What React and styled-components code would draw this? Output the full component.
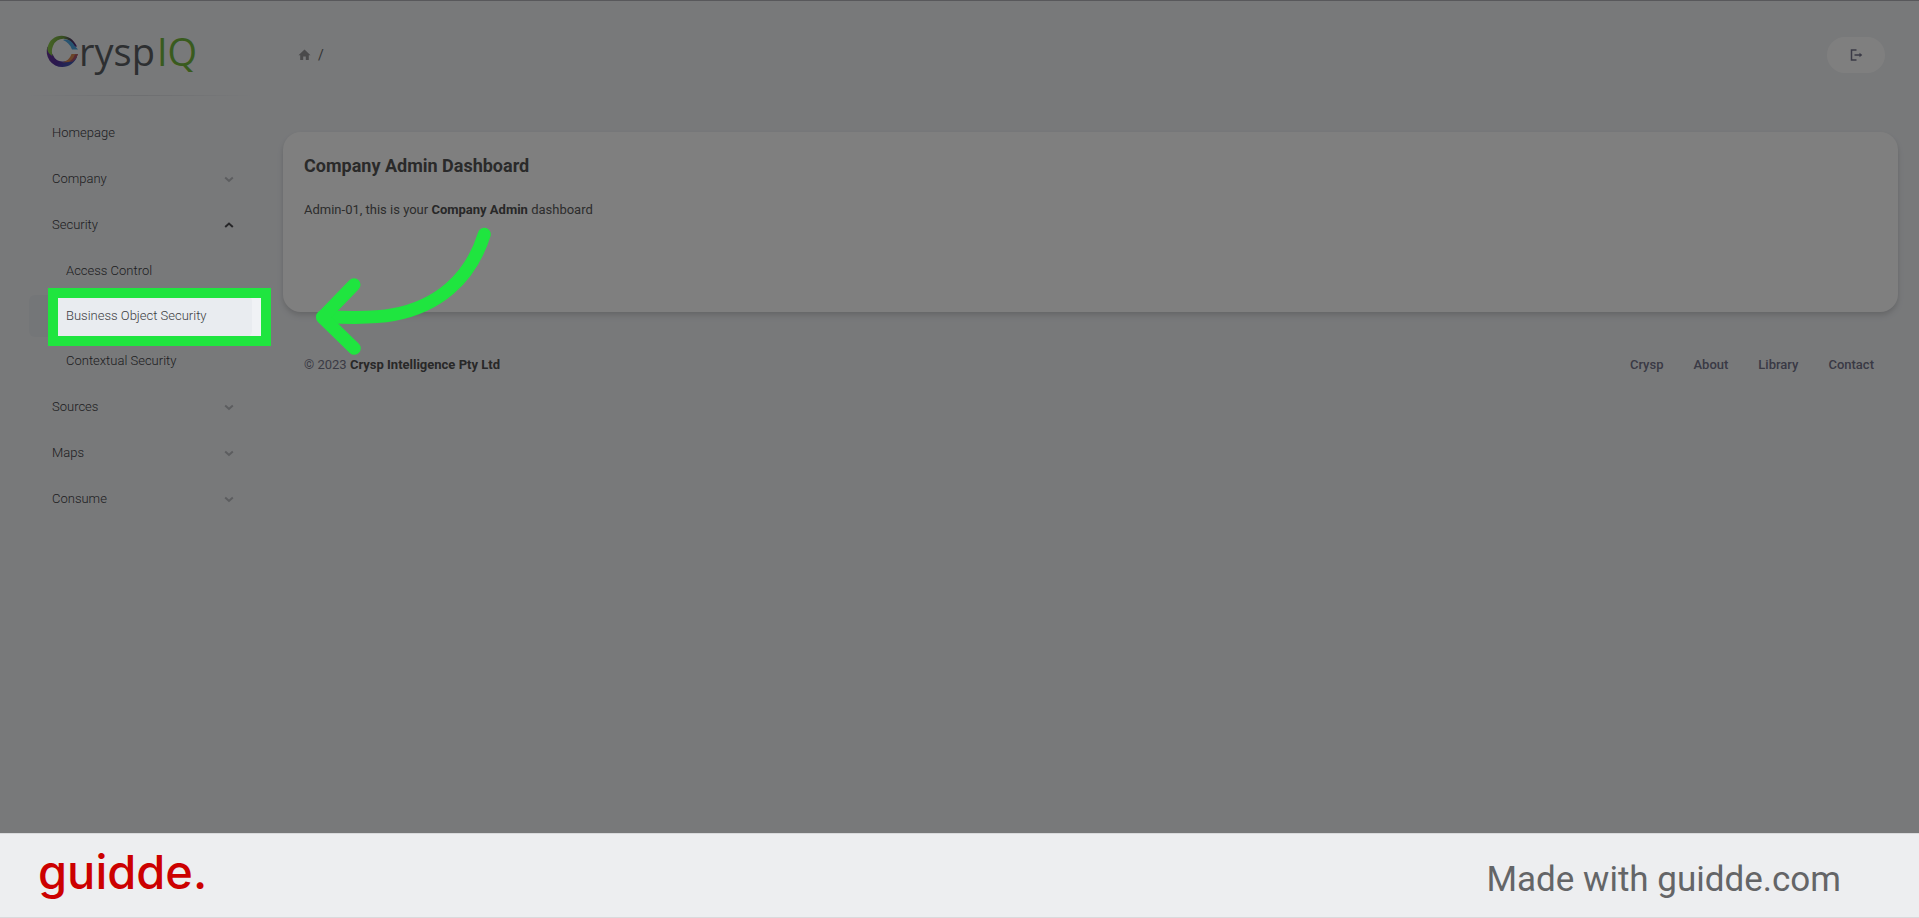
import React from "react";
import styled, { createGlobalStyle } from "styled-components";

const GlobalStyle = createGlobalStyle`
  *, *::before, *::after { box-sizing: border-box; }
  body {
    margin: 0;
    font-family: Roboto, "Liberation Sans", sans-serif;
    font-size: 13px;
    line-height: 20px;
    color: #5a5a5a;
    background: #f0f2f5;
  }
`;

const Page = styled.div`
  display: flex;
  flex-direction: column;
  min-height: 100vh;
`;

const Stage = styled.div`
  position: relative;
  flex: 1;
  display: flex;
  overflow: hidden;
  background: #f0f2f5;
  border-top: 1px solid #58585b;
`;

const Sidebar = styled.aside`
  flex: none;
  width: 283px;
  padding: 20px 31px 32px 29px;
`;

const LogoLink = styled.a`
  display: block;
  height: 62px;
  margin-left: 16px;
  svg { display: block; overflow: visible; }
`;

const Divider = styled.hr`
  height: 1px;
  margin: 12px 0 16px;
  border: 0;
  background: linear-gradient(90deg, transparent, #dcdee2, transparent);
`;

const NavList = styled.ul`
  display: flex;
  flex-direction: column;
  gap: ${(p) => (p.$nested ? 3 : 4)}px;
  margin: ${(p) => (p.$nested ? "4px 0 0" : "0")};
  padding: 0;
  list-style: none;
`;

const NavLink = styled.a`
  display: flex;
  align-items: center;
  justify-content: space-between;
  height: 42px;
  padding: 0 18px 0 ${(p) => (p.$nested ? 37 : 23)}px;
  border-radius: 6px;
  color: #3c3c42;
  font-weight: 300;
  text-decoration: none;
  background: ${(p) => (p.$active ? "#e9ecf0" : "transparent")};
`;

const Main = styled.main`
  flex: 1;
  min-width: 0;
  padding: 36px 21px 32px 0;
`;

const TopBar = styled.header`
  display: flex;
  align-items: center;
  justify-content: space-between;
  padding: 0 13px 0 15px;
`;

const Breadcrumb = styled.nav`
  display: flex;
  align-items: center;
  gap: 7px;
  color: #666;
  font-size: 14px;
  a { display: flex; color: #949496; }
`;

const LogoutButton = styled.button`
  display: flex;
  align-items: center;
  justify-content: center;
  width: 58px;
  height: 36px;
  padding: 0;
  border: 0;
  border-radius: 18px;
  color: #74748c;
  background: #fff;
`;

const Card = styled.section`
  min-height: 180px;
  margin-top: 59px;
  padding: 22px 21px;
  border-radius: 18px;
  background: #fff;
  box-shadow: 0 4px 6px rgba(0, 0, 0, 0.1), 0 2px 4px rgba(0, 0, 0, 0.06);
`;

const Title = styled.h1`
  margin: 0;
  font-size: 18px;
  line-height: 24px;
  font-weight: 700;
  color: #545454;
`;

const Intro = styled.p`
  margin: 22px 0 0;
  b { color: #505050; }
`;

const Footer = styled.footer`
  display: flex;
  justify-content: space-between;
  margin-top: 43px;
  padding: 0 24px 0 21px;
  color: #77778a;
  b { color: #505050; }
`;

const FooterLinks = styled.nav`
  display: flex;
  gap: 30px;
  a {
    color: #74748a;
    font-weight: 500;
    text-decoration: none;
  }
`;

const Spotlight = styled.div`
  position: absolute;
  left: 58px;
  top: 297px;
  width: 203px;
  height: 38px;
  outline: 10px solid #1fe53f;
  box-shadow: 0 0 0 4000px rgba(0, 0, 0, 0.5);
  pointer-events: none;
`;

const Arrow = styled.svg`
  position: absolute;
  left: 314px;
  top: 226px;
  pointer-events: none;
`;

const GuideBar = styled.footer`
  display: flex;
  align-items: center;
  justify-content: space-between;
  height: 85px;
  padding: 0 78px 0 38px;
  border: solid #d9dadc;
  border-width: 1px 0;
  background: #edeef0;
`;

const Brand = styled.span`
  padding-bottom: 8px;
  color: #c00;
  font-family: Inter, "Liberation Sans", sans-serif;
  font-size: 47px;
  line-height: 56px;
  font-weight: 500;
`;

const MadeWith = styled.span`
  padding-top: 8px;
  color: #646567;
  font-size: 35px;
  line-height: 40px;
`;

const LogoText = styled.text`
  font-family: "Open Sans", "Noto Sans", sans-serif;
  font-size: 38px;
  font-weight: 500;
`;

function CryspLogo() {
  return (
    <svg width="156" height="62" viewBox="0 -8 156 62" role="img" aria-label="CryspIQ">
      <defs>
        <linearGradient id="ringTop" x1="0" y1="0" x2="1" y2="0">
          <stop offset="0" stopColor="#8ccb4c" />
          <stop offset="0.55" stopColor="#6c9a40" />
          <stop offset="0.8" stopColor="#4c3a60" />
          <stop offset="1" stopColor="#5b2a86" />
        </linearGradient>
        <linearGradient id="ringBottom" x1="0" y1="0" x2="1" y2="0.6">
          <stop offset="0" stopColor="#6f3796" />
          <stop offset="0.6" stopColor="#55309c" />
          <stop offset="1" stopColor="#3f5cb4" />
        </linearGradient>
      </defs>
      <path d="M2.500 17.500 A15.500 15.500 0 0 0 17.500 38 C24 38 29.500 34 32 28 L27 27 A10.500 10.500 0 0 1 8 26 C5 22 4 20 2.500 17.500Z" fill="url(#ringBottom)" />
      <path d="M2.500 19 C5 4 25 2 32 17.500 L29 18 A11 11 0 0 0 8 17 C6.500 20 6.700 24 7.500 27 C4 25 2 22 2.500 19Z" fill="url(#ringTop)" />
      <path d="M18 11 C22 9.500 27 11.500 29.500 16.500 L33 20.500 L27 20.500 C25.500 16 22 12.500 18 11Z" fill="#4ea6e0" />
      <path d="M17 33.500 C22 32.500 25 29 26.500 25 L33 25 C31.500 30 27 33.500 17 33.500Z" fill="#d68850" />
      <path d="M27 33 C30 31 32 28 33 25 L30 25.500 C29 28 28 30 25 32Z" fill="#a8506a" />
      <LogoText x="34" y="37" fill="#5b5e62">rysp</LogoText>
      <LogoText x="112" y="37" fill="#72b63c">IQ</LogoText>
    </svg>
  );
}

function Chevron({ open }) {
  return (
    <svg width="10" height="8" viewBox="0 0 10 8" fill="none" stroke={open ? "#4c4c50" : "#b8babe"} strokeWidth="2" aria-hidden="true">
      <path d={open ? "M1.200 6 L5 2.500 L8.800 6" : "M1.200 2.500 L5 6 L8.800 2.500"} />
    </svg>
  );
}

const MENU = [
  { label: "Homepage" },
  { label: "Company", items: [] },
  {
    label: "Security",
    open: true,
    items: [
      { label: "Access Control" },
      { label: "Business Object Security", active: true },
      { label: "Contextual Security" },
    ],
  },
  { label: "Sources", items: [] },
  { label: "Maps", items: [] },
  { label: "Consume", items: [] },
];

export default function App() {
  return (
    <Page>
      <GlobalStyle />
      <Stage>
        <Sidebar>
          <LogoLink href="#"><CryspLogo /></LogoLink>
          <Divider />
          <nav aria-label="Main">
            <NavList>
              {MENU.map((entry) => (
                <li key={entry.label}>
                  <NavLink href="#" aria-expanded={entry.items ? !!entry.open : undefined}>
                    {entry.label}
                    {entry.items && <Chevron open={entry.open} />}
                  </NavLink>
                  {entry.open && (
                    <NavList $nested>
                      {entry.items.map((item) => (
                        <li key={item.label}>
                          <NavLink href="#" $nested $active={item.active}>{item.label}</NavLink>
                        </li>
                      ))}
                    </NavList>
                  )}
                </li>
              ))}
            </NavList>
          </nav>
        </Sidebar>
        <Main>
          <TopBar>
            <Breadcrumb aria-label="Breadcrumb">
              <a href="#" aria-label="Home">
                <svg width="13" height="12" viewBox="0 0 13 12" fill="currentColor" aria-hidden="true">
                  <path d="M6.500 0.500 L12.500 6.200 H10.800 V11 H7.800 V7.500 H5.200 V11 H2.200 V6.200 H0.500Z" />
                </svg>
              </a>
              <span>/</span>
            </Breadcrumb>
            <LogoutButton type="button" aria-label="Log out">
              <svg width="13" height="12" viewBox="0 0 13 12" fill="none" stroke="currentColor" strokeWidth="1.500" aria-hidden="true">
                <path d="M6.500 1 H1.500 V11 H6.500 M4.500 6 H11" />
                <path d="M9.500 3.800 L12.300 6 L9.500 8.200Z" fill="currentColor" stroke="none" />
              </svg>
            </LogoutButton>
          </TopBar>
          <Card>
            <Title>Company Admin Dashboard</Title>
            <Intro>Admin-01, this is your <b>Company Admin</b> dashboard</Intro>
          </Card>
          <Footer>
            <span>© 2023 <b>Crysp Intelligence Pty Ltd</b></span>
            <FooterLinks aria-label="Footer">
              <a href="#">Crysp</a>
              <a href="#">About</a>
              <a href="#">Library</a>
              <a href="#">Contact</a>
            </FooterLinks>
          </Footer>
        </Main>
        <Spotlight />
        <Arrow width="180" height="130" viewBox="0 0 180 130" fill="none" stroke="#1fe53f" strokeWidth="13" strokeLinecap="round" strokeLinejoin="round" aria-hidden="true">
          <path d="M170.300 7.300 C156 53 122.700 79.700 79.300 87.700 C62.700 91 39.300 91 8.700 89.500" />
          <path d="M40 57.700 L8.500 90.300 L40.300 121.300" />
        </Arrow>
      </Stage>
      <GuideBar>
        <Brand>guidde.</Brand>
        <MadeWith>Made with guidde.com</MadeWith>
      </GuideBar>
    </Page>
  );
}
